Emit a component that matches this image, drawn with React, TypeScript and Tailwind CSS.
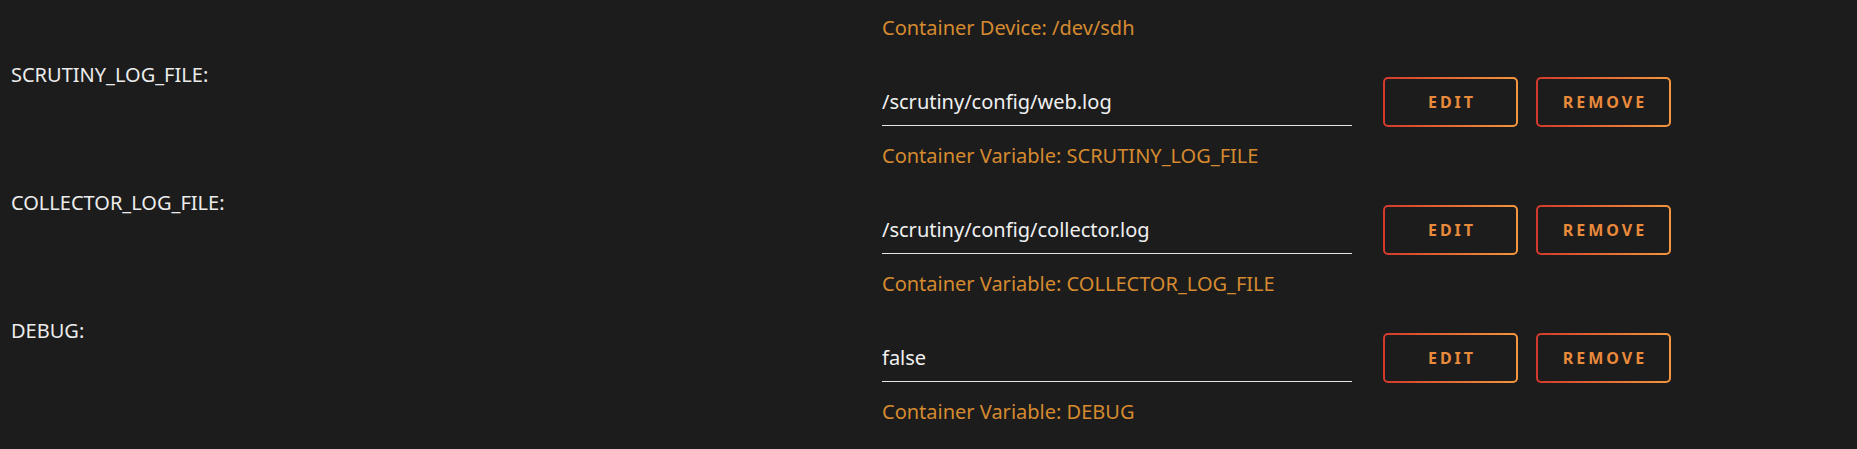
import React from "react";

type Setting = {
  label: string;
  value: string;
  help: string;
};

const settings: Setting[] = [
  {
    label: "SCRUTINY_LOG_FILE:",
    value: "/scrutiny/config/web.log",
    help: "Container Variable: SCRUTINY_LOG_FILE",
  },
  {
    label: "COLLECTOR_LOG_FILE:",
    value: "/scrutiny/config/collector.log",
    help: "Container Variable: COLLECTOR_LOG_FILE",
  },
  {
    label: "DEBUG:",
    value: "false",
    help: "Container Variable: DEBUG",
  },
];

function OutlineButton({ children }: { children: React.ReactNode }) {
  return (
    <div className="rounded-[5px] bg-linear-to-r from-[#d3382c] to-[#f3963e] p-[2px]">
      <button className="flex h-[46px] w-[131px] items-center justify-center rounded-[3px] bg-[#1c1c1c] pl-[3px] text-[16px] font-bold tracking-[3px] text-[#ea8a3b]">
        {children}
      </button>
    </div>
  );
}

function SettingRow({ setting }: { setting: Setting }) {
  return (
    <div className="flex items-start">
      {/* Label */}
      <div className="w-[882px] shrink-0 pl-[11px] leading-[26px] text-[#ececec]">
        {setting.label}
      </div>

      {/* Value + actions */}
      <div className="flex flex-col pt-[15px]">
        <div className="flex items-start">
          <div className="w-[470px] border-b border-[#e4e4e4] pt-[12px] pb-[10px] leading-[26px] text-[#f0f0f0]">
            {setting.value}
          </div>
          <div className="ml-[31px] flex gap-[18px]">
            <OutlineButton>EDIT</OutlineButton>
            <OutlineButton>REMOVE</OutlineButton>
          </div>
        </div>
        <div className="mt-[16px] leading-[26px] text-[#d68a30]">{setting.help}</div>
      </div>
    </div>
  );
}

export default function App() {
  return (
    <div className="min-h-screen w-full bg-[#1c1c1c] pt-[15px] font-['Noto_Sans',sans-serif] text-[20px]">
      {/* tail of the previous entry */}
      <div className="pl-[882px] leading-[26px] text-[#d68a30]">Container Device: /dev/sdh</div>

      <div className="mt-[21px] flex flex-col gap-[21px]">
        {settings.map((s) => (
          <SettingRow key={s.label} setting={s} />
        ))}
      </div>
    </div>
  );
}
